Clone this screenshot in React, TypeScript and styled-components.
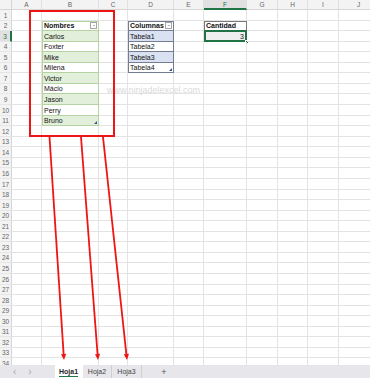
import React from 'react';
import styled, { createGlobalStyle, css } from 'styled-components';

const GlobalStyle = createGlobalStyle`
    html, body {
        margin: 0;
        padding: 0;
        background: #ffffff;
    }
    body {
        font-family: 'Liberation Sans', Arial, sans-serif;
    }
`;

type Tone =
    | 'plain'
    | 'greenHead'
    | 'green'
    | 'greenWhite'
    | 'blueHead'
    | 'blue'
    | 'blueWhite'
    | 'boxHead'
    | 'active';

interface Spec {
    text?: string;
    tone: Tone;
    bold?: boolean;
    right?: boolean;
    filter?: boolean;
    corner?: boolean;
}

const COLS = [
    { id: 'A', w: 30 },
    { id: 'B', w: 57 },
    { id: 'C', w: 29 },
    { id: 'D', w: 46 },
    { id: 'E', w: 30 },
    { id: 'F', w: 43 },
    { id: 'G', w: 31 },
    { id: 'H', w: 30 },
    { id: 'I', w: 31 },
    { id: 'J', w: 40 },
];

const ROW_COUNT = 34;
const ROW_H = 10.56;
const GRID = '#e3e3e3';
const GREEN_LINE = '#b4d3a1';
const BLUE_LINE = '#737d8f';

const names = ['Carlos', 'Foxter', 'Mike', 'Milena', 'Victor', 'Mácio', 'Jason', 'Perry', 'Bruno'];
const tabelas = ['Tabela1', 'Tabela2', 'Tabela3', 'Tabela4'];

const cells: Record<string, Spec> = {
    B2: { text: 'Nombres', tone: 'greenHead', bold: true, filter: true },
    D2: { text: 'Columnas', tone: 'blueHead', bold: true, filter: true },
    F2: { text: 'Cantidad', tone: 'boxHead', bold: true },
    F3: { text: '3', tone: 'active', right: true },
};
names.forEach((n, i) => {
    cells[`B${i + 3}`] = {
        text: n,
        tone: i % 2 === 0 ? 'green' : 'greenWhite',
        corner: i === names.length - 1,
    };
});
tabelas.forEach((t, i) => {
    cells[`D${i + 3}`] = {
        text: t,
        tone: i % 2 === 0 ? 'blue' : 'blueWhite',
        corner: i === tabelas.length - 1,
    };
});

const toneStyles: Record<Tone, ReturnType<typeof css>> = {
    plain: css``,
    greenHead: css`
        background: #ffffff;
        border-right-color: ${GREEN_LINE};
        border-bottom-color: ${GREEN_LINE};
        box-shadow: inset 1px 0 0 ${GREEN_LINE}, inset 0 1px 0 ${GREEN_LINE};
    `,
    green: css`
        background: #e2efda;
        border-right-color: ${GREEN_LINE};
        border-bottom-color: ${GREEN_LINE};
        box-shadow: inset 1px 0 0 ${GREEN_LINE};
    `,
    greenWhite: css`
        background: #ffffff;
        border-right-color: ${GREEN_LINE};
        border-bottom-color: ${GREEN_LINE};
        box-shadow: inset 1px 0 0 ${GREEN_LINE};
    `,
    blueHead: css`
        background: #ffffff;
        border-right-color: ${BLUE_LINE};
        border-bottom-color: ${BLUE_LINE};
        box-shadow: inset 1px 0 0 ${BLUE_LINE}, inset 0 1px 0 ${BLUE_LINE};
    `,
    blue: css`
        background: #d9e1f2;
        border-right-color: ${BLUE_LINE};
        border-bottom-color: ${BLUE_LINE};
        box-shadow: inset 1px 0 0 ${BLUE_LINE};
    `,
    blueWhite: css`
        background: #ffffff;
        border-right-color: ${BLUE_LINE};
        border-bottom-color: ${BLUE_LINE};
        box-shadow: inset 1px 0 0 ${BLUE_LINE};
    `,
    boxHead: css`
        background: #ffffff;
        border-right-color: #7a7a7a;
        border-bottom-color: #7a7a7a;
        box-shadow: inset 1px 0 0 #7a7a7a, inset 0 1px 0 #7a7a7a;
    `,
    active: css`
        background: #efefef;
        &::before {
            content: '';
            position: absolute;
            left: 0;
            top: -1px;
            right: -1px;
            bottom: -1px;
            border: 2px solid #217346;
        }
        &::after {
            content: '';
            position: absolute;
            right: -3px;
            bottom: -3px;
            width: 4px;
            height: 4px;
            background: #217346;
            border: 1px solid #ffffff;
            box-sizing: border-box;
        }
    `,
};

const Sheet = styled.div`
    position: relative;
    width: 370px;
    height: 378px;
    overflow: hidden;
    display: flex;
    flex-direction: column;
    background: #ffffff;
`;

const Grid = styled.div`
    height: 365px;
    overflow: hidden;
    flex: none;
`;

const Row = styled.div<{ $h: number }>`
    display: flex;
    height: ${(p) => p.$h}px;
`;

const Corner = styled.div`
    width: 12px;
    flex: none;
    box-sizing: border-box;
    background: #f3f3f3;
    border-right: 1px solid #d6d6d6;
    border-bottom: 1px solid #d6d6d6;
`;

const ColHeader = styled.div<{ $w: number; $selected?: boolean }>`
    width: ${(p) => p.$w}px;
    flex: none;
    box-sizing: border-box;
    display: flex;
    align-items: center;
    justify-content: center;
    font-size: 6.5px;
    color: #666666;
    background: #f3f3f3;
    border-right: 1px solid #e0e0e0;
    border-bottom: 1px solid #d6d6d6;
    ${(p) =>
        p.$selected &&
        css`
            background: #e1e1e1;
            color: #217346;
            border-bottom: 2px solid #217346;
        `}
`;

const RowHeader = styled.div<{ $selected?: boolean }>`
    width: 12px;
    flex: none;
    box-sizing: border-box;
    display: flex;
    align-items: center;
    justify-content: center;
    font-size: 6.5px;
    color: #666666;
    background: #f3f3f3;
    border-right: 1px solid #d6d6d6;
    border-bottom: 1px solid #e6e6e6;
    ${(p) =>
        p.$selected &&
        css`
            background: #e1e1e1;
            color: #217346;
            border-right: 2px solid #217346;
        `}
`;

const Cell = styled.div<{ $w: number; $tone: Tone; $bold?: boolean; $right?: boolean }>`
    position: relative;
    width: ${(p) => p.$w}px;
    flex: none;
    box-sizing: border-box;
    display: flex;
    align-items: center;
    justify-content: ${(p) => (p.$right ? 'flex-end' : 'space-between')};
    padding: 0 2px;
    font-size: 7px;
    font-weight: ${(p) => (p.$bold ? 700 : 400)};
    color: #111111;
    white-space: nowrap;
    border-right: 1px solid ${GRID};
    border-bottom: 1px solid ${GRID};
    ${(p) => toneStyles[p.$tone]}
`;

const FilterButton = styled.span`
    width: 7px;
    height: 7px;
    flex: none;
    margin-right: -1px;
    box-sizing: border-box;
    border: 1px solid #a6a6a6;
    background: #ffffff;
    display: flex;
    align-items: center;
    justify-content: center;

    &::after {
        content: '';
        border-left: 1.5px solid transparent;
        border-right: 1.5px solid transparent;
        border-top: 1.5px solid #666666;
    }
`;

const ResizeCorner = styled.span`
    position: absolute;
    right: 1px;
    bottom: 1px;
    width: 0;
    height: 0;
    border-left: 3px solid transparent;
    border-bottom: 3px solid #2f5597;
`;

const Watermark = styled.div`
    position: absolute;
    left: 107px;
    top: 85px;
    font-size: 9px;
    color: #dadada;
    white-space: nowrap;
    pointer-events: none;
`;

const Annotations = styled.svg`
    position: absolute;
    left: 0;
    top: 0;
    pointer-events: none;
`;

const TabBar = styled.div`
    flex: 1;
    display: flex;
    align-items: stretch;
    background: #e7e6eb;
    font-size: 7px;
    color: #444444;
`;

const NavArea = styled.div`
    width: 55px;
    flex: none;
    display: flex;
    align-items: center;
    padding-left: 13px;
    gap: 12px;
    box-sizing: border-box;
    color: #a8a8a8;
    font-size: 10px;
    line-height: 1;
`;

const Tab = styled.div<{ $active?: boolean; $w: number }>`
    width: ${(p) => p.$w}px;
    flex: none;
    box-sizing: border-box;
    display: flex;
    align-items: center;
    justify-content: center;
    position: relative;
    border-right: 1px solid ${(p) => (p.$active ? 'transparent' : '#cfced4')};
    ${(p) =>
        p.$active &&
        css`
            background: #ffffff;
            font-weight: 700;
            color: #1f1f1f;
            &::after {
                content: '';
                position: absolute;
                left: 4px;
                right: 4px;
                bottom: 1px;
                height: 1.5px;
                background: #217346;
            }
        `}
`;

const AddTab = styled.div`
    width: 44px;
    flex: none;
    display: flex;
    align-items: center;
    justify-content: center;
    font-size: 9px;
    color: #555555;
`;

const Arrow: React.FC<{ x1: number; y1: number; x2: number; y2: number }> = ({ x1, y1, x2, y2 }) => {
    const len = Math.hypot(x2 - x1, y2 - y1);
    const ux = (x2 - x1) / len;
    const uy = (y2 - y1) / len;
    const hl = 6;
    const hw = 2.6;
    const bx = x2 - ux * hl;
    const by = y2 - uy * hl;
    const pts = `${x2},${y2} ${bx - uy * hw},${by + ux * hw} ${bx + uy * hw},${by - ux * hw}`;
    return (
        <g>
            <line x1={x1} y1={y1} x2={bx} y2={by} stroke="#ee1515" strokeWidth={1.8} />
            <polygon points={pts} fill="#ee1515" />
        </g>
    );
};

const rowHeight = (i: number) => Math.round((i + 1) * ROW_H) - Math.round(i * ROW_H);

export default function App() {
    return (
        <>
            <GlobalStyle />
            <Sheet>
                <Grid>
                    <Row $h={10}>
                        <Corner />
                        {COLS.map((c) => (
                            <ColHeader key={c.id} $w={c.w} $selected={c.id === 'F'}>
                                {c.id}
                            </ColHeader>
                        ))}
                    </Row>
                    {Array.from({ length: ROW_COUNT }, (_, i) => {
                        const r = i + 1;
                        return (
                            <Row key={r} $h={rowHeight(i)}>
                                <RowHeader $selected={r === 3}>{r}</RowHeader>
                                {COLS.map((c) => {
                                    const spec = cells[`${c.id}${r}`];
                                    return (
                                        <Cell
                                            key={c.id}
                                            $w={c.w}
                                            $tone={spec?.tone ?? 'plain'}
                                            $bold={spec?.bold}
                                            $right={spec?.right}
                                        >
                                            {spec?.text && <span>{spec.text}</span>}
                                            {spec?.filter && <FilterButton />}
                                            {spec?.corner && <ResizeCorner />}
                                        </Cell>
                                    );
                                })}
                            </Row>
                        );
                    })}
                </Grid>
                <TabBar>
                    <NavArea>
                        <span>‹</span>
                        <span>›</span>
                    </NavArea>
                    <Tab $active $w={28}>
                        Hoja1
                    </Tab>
                    <Tab $w={29}>Hoja2</Tab>
                    <Tab $w={30}>Hoja3</Tab>
                    <AddTab>+</AddTab>
                </TabBar>
                <Watermark>www.ninjadelexcel.com</Watermark>
                <Annotations width={370} height={378} viewBox="0 0 370 378">
                    <rect x={30} y={11} width={84} height={125} fill="none" stroke="#ee1515" strokeWidth={2} />
                    <Arrow x1={49.5} y1={137} x2={64} y2={360} />
                    <Arrow x1={81} y1={137} x2={98} y2={360} />
                    <Arrow x1={103} y1={137} x2={127} y2={360} />
                </Annotations>
            </Sheet>
        </>
    );
}
